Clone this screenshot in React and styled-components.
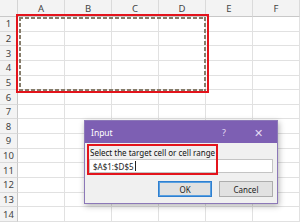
import React from "react";
import styled, { createGlobalStyle } from "styled-components";

const Global = createGlobalStyle`
  html, body { margin: 0; padding: 0; background: #fff; overflow: hidden; }
  body { font-family: "Noto Sans", "Open Sans", sans-serif; }
`;

const Sheet = styled.div`
  position: relative;
  width: 300px;
  height: 222px;
  overflow: hidden;
  background: #fff;
`;

const Grid = styled.div`
  display: grid;
  grid-template-columns: 18px repeat(6, 47px);
  grid-template-rows: 17px repeat(14, 14.65px);
`;

const Corner = styled.div`
  background: #f3f3f3;
  border-right: 1px solid #d4d4d4;
  border-bottom: 1px solid #c8c8c8;
  box-sizing: border-box;
`;

const ColHead = styled.div`
  background: #f3f3f3;
  border-right: 1px solid #dadada;
  border-bottom: 1px solid #c8c8c8;
  box-sizing: border-box;
  display: flex;
  align-items: center;
  justify-content: center;
  font-size: 9.5px;
  color: #444;
  padding-top: 1px;
`;

const RowHead = styled.div`
  background: #f3f3f3;
  border-right: 1px solid #c8c8c8;
  border-bottom: 1px solid #dadada;
  box-sizing: border-box;
  display: flex;
  align-items: center;
  justify-content: center;
  font-size: 9.5px;
  color: #444;
`;

const Cell = styled.div`
  border-right: 1px solid #e1e1e1;
  border-bottom: 1px solid #e1e1e1;
  box-sizing: border-box;
`;

const dash = "#857c6a";

const Marquee = styled.div`
  position: absolute;
  left: 19px;
  top: 17px;
  width: 187px;
  height: 74px;
  background-image:
    repeating-linear-gradient(90deg, ${dash} 0 4px, transparent 4px 6px),
    repeating-linear-gradient(90deg, ${dash} 0 4px, transparent 4px 6px),
    repeating-linear-gradient(180deg, ${dash} 0 4px, transparent 4px 6px),
    repeating-linear-gradient(180deg, ${dash} 0 4px, transparent 4px 6px);
  background-size: 100% 2px, 100% 2px, 2px 100%, 2px 100%;
  background-position: 0 0, 0 100%, 0 0, 100% 0;
  background-repeat: no-repeat;
`;

const Highlight = styled.div`
  position: absolute;
  left: ${(p) => p.$x}px;
  top: ${(p) => p.$y}px;
  width: ${(p) => p.$w}px;
  height: ${(p) => p.$h}px;
  box-sizing: border-box;
  border: ${(p) => p.$t}px solid #e3141c;
`;

const Dialog = styled.div`
  position: absolute;
  left: 84px;
  top: 120px;
  width: 194px;
  height: 84px;
  background: #f0f0f0;
  border: 1px solid #8c78b8;
  box-sizing: border-box;
  box-shadow: 1px 2px 6px rgba(0, 0, 0, 0.3);
  display: flex;
  flex-direction: column;
`;

const TitleBar = styled.div`
  height: 22px;
  background: #7d5fb3;
  display: flex;
  align-items: center;
  padding: 0 0 0 6px;
  color: #fff;
  font-size: 8.5px;
`;

const Title = styled.div`
  flex: 1;
`;

const TitleBtn = styled.div`
  width: ${(p) => p.$w}px;
  text-align: center;
  font-size: ${(p) => p.$fs}px;
  color: #e3daf2;
`;

const Body = styled.div`
  flex: 1;
  display: flex;
  flex-direction: column;
  padding: 4px 4px 0 4px;
`;

const Label = styled.div`
  font-size: 8px;
  color: #111;
  height: 12px;
  line-height: 12px;
  padding-left: 1px;
  white-space: nowrap;
`;

const Input = styled.div`
  height: 14px;
  background: #fff;
  border: 1px solid #c4c4c4;
  box-sizing: border-box;
  font-size: 8px;
  color: #222;
  display: flex;
  align-items: center;
  padding-left: 3px;
`;

const Caret = styled.span`
  display: inline-block;
  width: 1px;
  height: 10px;
  background: #222;
  margin-left: 1px;
`;

const Buttons = styled.div`
  display: flex;
  justify-content: flex-end;
  gap: 7px;
  margin-top: 8px;
`;

const Button = styled.div`
  width: 54px;
  height: 16px;
  box-sizing: border-box;
  background: #e1e1e1;
  border: 1px solid ${(p) => (p.$primary ? "#2f7fd0" : "#adadad")};
  box-shadow: ${(p) => (p.$primary ? "inset 0 0 0 1px #5aa0e0" : "none")};
  display: flex;
  align-items: center;
  justify-content: center;
  font-size: 8px;
  color: #222;
`;

const cols = ["A", "B", "C", "D", "E", "F"];
const rows = Array.from({ length: 14 }, (_, i) => i + 1);

export default function App() {
  return (
    <Sheet>
      <Global />
      <Grid>
        <Corner />
        {cols.map((c) => (
          <ColHead key={c}>{c}</ColHead>
        ))}
        {rows.map((r) => (
          <React.Fragment key={r}>
            <RowHead>{r}</RowHead>
            {cols.map((c) => (
              <Cell key={c + r} />
            ))}
          </React.Fragment>
        ))}
      </Grid>
      <Marquee />
      <Highlight $x={16} $y={14} $w={193} $h={79} $t={2.5} />
      <Dialog>
        <TitleBar>
          <Title>Input</Title>
          <TitleBtn $w={30} $fs={9}>?</TitleBtn>
          <TitleBtn $w={38} $fs={11}>✕</TitleBtn>
        </TitleBar>
        <Body>
          <Label>Select the target cell or cell range</Label>
          <Input>
            $A$1:$D$5
            <Caret />
          </Input>
          <Buttons>
            <Button $primary>OK</Button>
            <Button>Cancel</Button>
          </Buttons>
        </Body>
      </Dialog>
      <Highlight $x={87} $y={144} $w={131} $h={31} $t={2} />
    </Sheet>
  );
}
